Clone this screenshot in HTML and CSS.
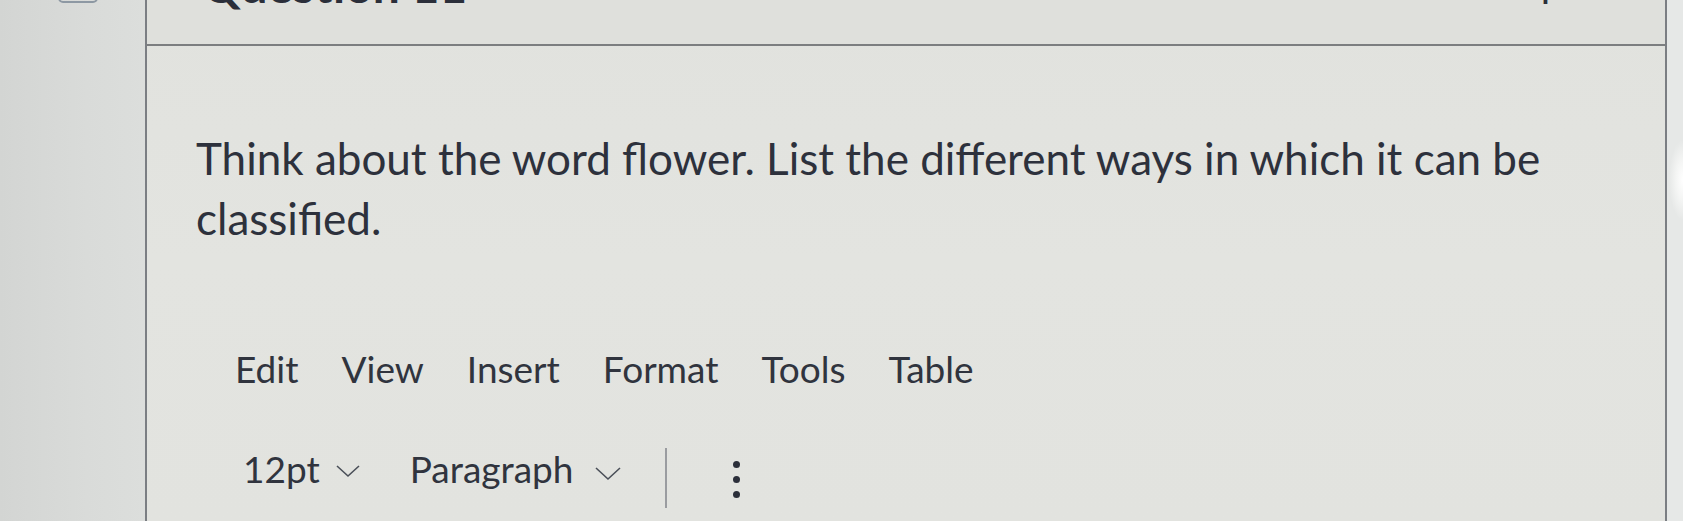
FILE: index.html
```html
<!DOCTYPE html>
<html lang="en">
<head>
<meta charset="utf-8">
<title>Question 11</title>
<link rel="stylesheet" href="styles.css">
</head>
<body>
<div class="page">
  <aside class="gutter">
    <span class="flag-box"></span>
  </aside>
  <main class="card">
    <header class="card-head">
      <h2 class="q-title">Question 11</h2>
      <span class="q-pts">1 pts</span>
    </header>
    <section class="card-body">
      <p class="q-text">Think about the word flower. List the different ways in which it can be classified.</p>
      <nav class="menubar">
        <span class="menu-item">Edit</span>
        <span class="menu-item">View</span>
        <span class="menu-item">Insert</span>
        <span class="menu-item">Format</span>
        <span class="menu-item">Tools</span>
        <span class="menu-item">Table</span>
      </nav>
      <div class="toolbar">
        <span class="tb-label tb-size">12pt</span>
        <svg class="chev chev-size" width="24" height="13" viewBox="0 0 24 13"><polyline points="1,1 12,11 23,1" fill="none" stroke="#4a4f58" stroke-width="1.6"/></svg>
        <span class="tb-label tb-block">Paragraph</span>
        <svg class="chev chev-block" width="26" height="14" viewBox="0 0 26 14"><polyline points="1,1 13,12 25,1" fill="none" stroke="#4a4f58" stroke-width="1.6"/></svg>
        <span class="tb-divider"></span>
        <span class="kebab"><i></i><i></i><i></i></span>
      </div>
    </section>
  </main>
  <div class="edge"></div>
</div>
</body>
</html>
```

FILE: styles.css
```css
html, body {
  margin: 0;
  padding: 0;
}
body {
  width: 1683px;
  height: 521px;
  overflow: hidden;
  background: #d7d9d7;
  font-family: Lato, "Open Sans", sans-serif;
  color: #2b2f3a;
}
.page {
  display: flex;
  height: 521px;
}
.gutter {
  width: 145px;
  flex: none;
  background: linear-gradient(90deg, #d3d5d3 0%, #d9dbd9 60%, #dcdedc 100%);
  position: relative;
}
.flag-box {
  position: absolute;
  left: 58px;
  top: -30px;
  width: 40px;
  height: 33px;
  border: 2px solid #8d98a3;
  border-radius: 5px;
  box-sizing: border-box;
}
.card {
  flex: 1;
  display: flex;
  flex-direction: column;
  background: linear-gradient(180deg, #e1e2de 0%, #e3e4e0 50%, #e2e3df 100%);
  border-left: 2px solid #7b7e83;
  border-right: 2px solid #7b7e83;
}
.card-head {
  height: 44px;
  flex: none;
  border-bottom: 2px solid #7c7e80;
  display: flex;
  justify-content: space-between;
  align-items: flex-end;
  overflow: hidden;
  background: #dfe0dc;
}
.q-title {
  margin: 0 0 35px 55px;
  font-size: 48px;
  font-weight: 700;
  line-height: 1;
  color: #2b2f3a;
}
.q-pts {
  margin: 0 82px 42px 0;
  font-size: 30px;
  font-weight: 700;
  line-height: 1;
  color: #2b2f3a;
}
.card-body {
  padding: 82px 0 0 49px;
}
.q-text {
  margin: 0;
  font-size: 44px;
  line-height: 60px;
  width: 1420px;
  color: #2d313c;
}
.menubar {
  display: flex;
  gap: 43px;
  margin: 98px 0 0 39px;
  font-size: 37px;
  line-height: 46px;
  color: #30343e;
}
.toolbar {
  display: flex;
  align-items: flex-start;
  margin: 55px 0 0 47px;
  height: 62px;
}
.tb-label {
  font-size: 37px;
  line-height: 44px;
  color: #30343e;
}
.chev {
  flex: none;
}
.chev-size {
  margin: 18px 0 0 16px;
}
.tb-block {
  margin-left: 50px;
}
.chev-block {
  margin: 20px 0 0 22px;
}
.tb-divider {
  width: 2px;
  height: 60px;
  margin: 1px 0 0 44px;
  background: #9a9ca0;
}
.kebab {
  display: flex;
  flex-direction: column;
  gap: 8px;
  margin: 14px 0 0 66px;
}
.kebab i {
  display: block;
  width: 7px;
  height: 7px;
  border-radius: 50%;
  background: #2b2f3a;
}
.edge {
  width: 16px;
  flex: none;
  background: radial-gradient(ellipse 14px 40px at 100% 180px, #ffffff 0%, #f4f5f4 50%, #e6e8e7 100%);
}
```
